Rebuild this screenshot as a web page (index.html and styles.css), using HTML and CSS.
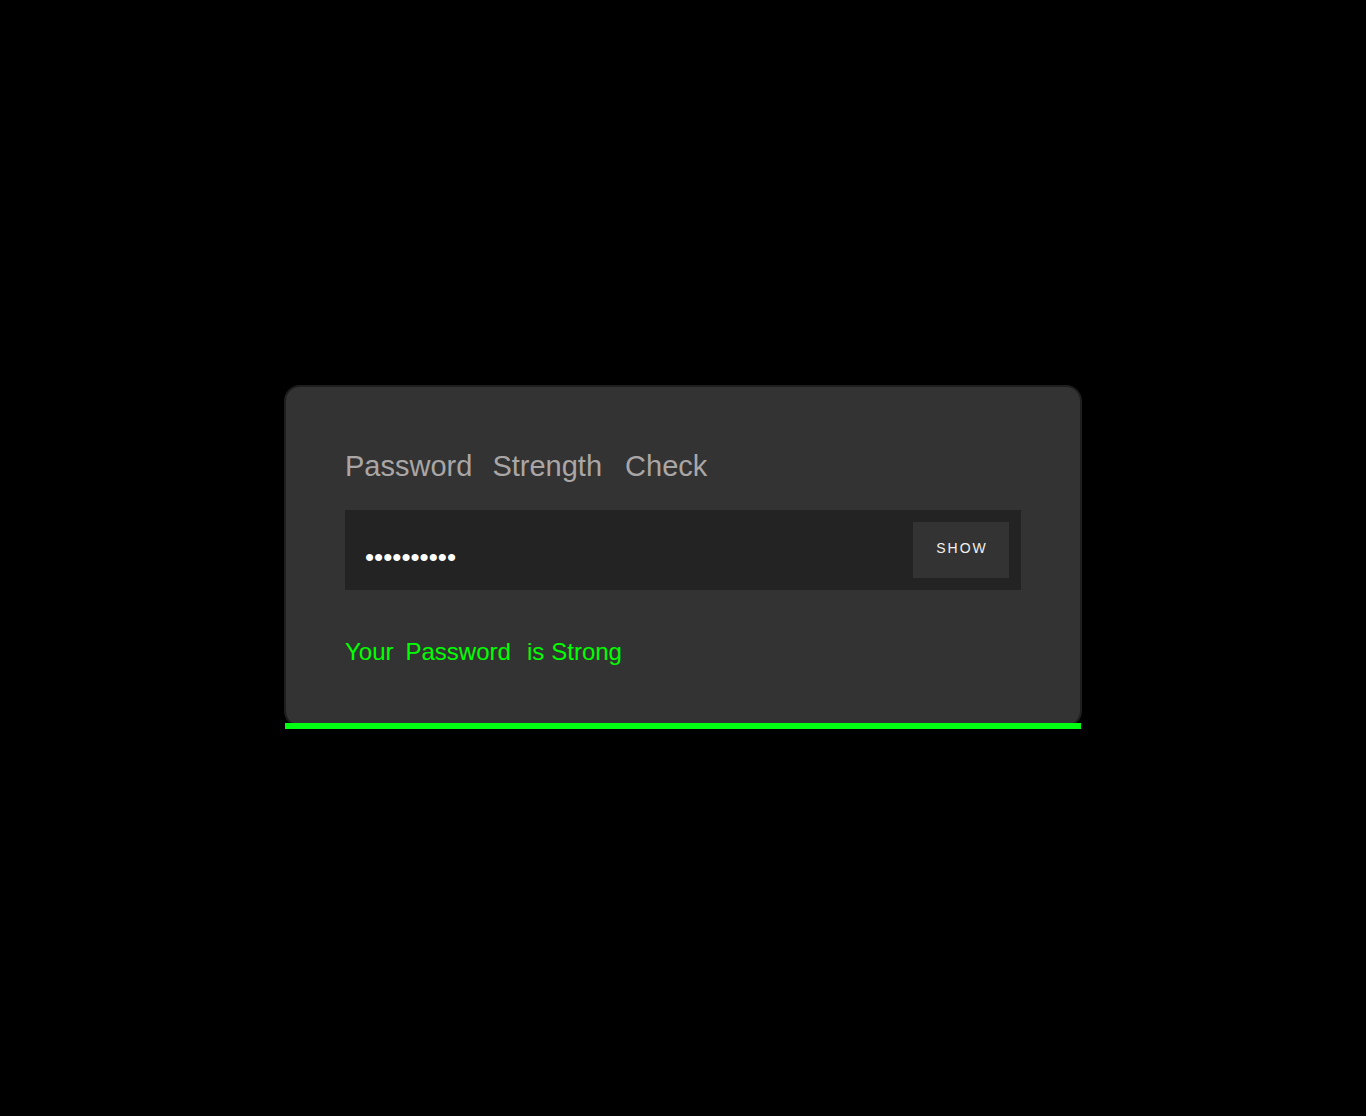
FILE: index.html
```html
<!DOCTYPE html>
<html lang="en">
<head>
<meta charset="utf-8">
<title>Password Strength Check</title>
<link rel="stylesheet" href="styles.css">
</head>
<body>
<div class="wrap">
  <div class="card">
    <h2 class="title">Password Strength <span class="t3">Check</span></h2>
    <div class="field">
      <input class="pw" type="password" value="abcdefghij" aria-label="Password">
      <button class="show" type="button">SHOW</button>
    </div>
    <p class="status"><span class="w1">Your</span><span class="w2">Password</span><span class="w3">is</span>Strong</p>
    <div class="bar"></div>
  </div>
</div>
</body>
</html>
```

FILE: styles.css
```css
html, body {
  margin: 0;
  padding: 0;
  background: #000;
}
body {
  min-height: 100vh;
  display: flex;
  align-items: center;
  justify-content: center;
  font-family: "Liberation Sans", Arial, sans-serif;
}
.wrap {
  padding-bottom: 2px;
  margin-bottom: 2px;
}
.card {
  position: relative;
  width: 676px;
  padding: 63px 59px 59px;
  background: #333333;
  border: 2px solid #1e1e1e;
  border-radius: 16px;
}
.title {
  margin: 0;
  font-size: 29px;
  font-weight: normal;
  line-height: 33px;
  color: #aaa6a6;
  word-spacing: 12px;
}
.t3 {
  margin-left: 3px;
}
.field {
  margin-top: 27px;
  height: 80px;
  display: flex;
  align-items: center;
  background: #232323;
}
.pw {
  flex: 1;
  min-width: 0;
  height: 80px;
  box-sizing: border-box;
  padding: 14px 0 0 20px;
  border: 0;
  outline: none;
  background: transparent;
  color: #fff;
  font-family: "Liberation Sans", Arial, sans-serif;
  font-size: 26px;
}
.show {
  width: 96px;
  height: 56px;
  margin: 0 12px;
  border: 0;
  background: #333333;
  color: #f0f0f0;
  font-family: "Liberation Sans", Arial, sans-serif;
  font-size: 14px;
  letter-spacing: 2px;
  padding: 0 0 4px 2px;
}
.status {
  margin: 48px 0 0;
  font-size: 24px;
  line-height: 28px;
  color: #00ff00;
}
.w1 { margin-right: 12px; }
.w2 { margin-right: 16px; }
.w3 { margin-right: 7px; }
.bar {
  position: absolute;
  left: -1px;
  right: -1px;
  bottom: -4px;
  height: 6px;
  background: #00ff11;
}
```
